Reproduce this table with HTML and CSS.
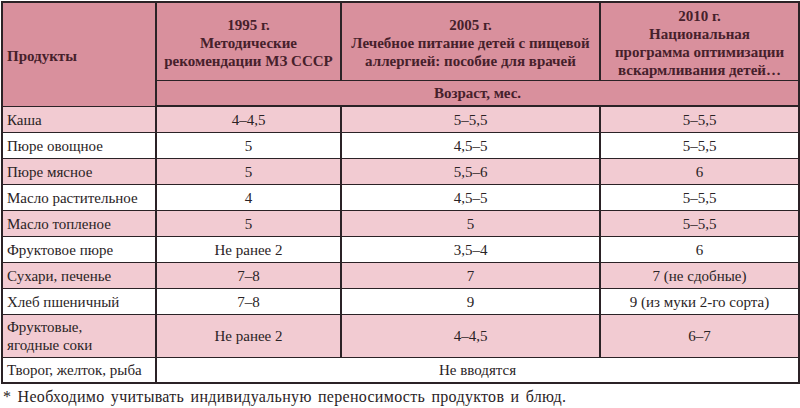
FILE: index.html
```html
<!DOCTYPE html>
<html lang="ru">
<head>
<meta charset="utf-8">
<title>Сроки введения продуктов</title>
<link rel="stylesheet" href="styles.css">
</head>
<body>
<div class="page">
<table class="grid">
  <colgroup>
    <col class="c1"><col class="c2"><col class="c3"><col class="c4">
  </colgroup>
  <thead>
    <tr class="h1">
      <th rowspan="2" class="prod">Продукты</th>
      <th>1995 г.<br>Методические<br>рекомендации МЗ СССР</th>
      <th>2005 г.<br>Лечебное питание детей с пищевой<br>аллергией: пособие для врачей</th>
      <th>2010 г.<br>Национальная<br>программа оптимизации<br>вскармливания детей…</th>
    </tr>
    <tr class="h2">
      <th colspan="3">Возраст, мес.</th>
    </tr>
  </thead>
  <tbody>
    <tr class="pink"><td>Каша</td><td>4–4,5</td><td>5–5,5</td><td>5–5,5</td></tr>
    <tr><td>Пюре овощное</td><td>5</td><td>4,5–5</td><td>5–5,5</td></tr>
    <tr class="pink"><td>Пюре мясное</td><td>5</td><td>5,5–6</td><td>6</td></tr>
    <tr><td>Масло растительное</td><td>4</td><td>4,5–5</td><td>5–5,5</td></tr>
    <tr class="pink"><td>Масло топленое</td><td>5</td><td>5</td><td>5–5,5</td></tr>
    <tr><td>Фруктовое пюре</td><td>Не ранее 2</td><td>3,5–4</td><td>6</td></tr>
    <tr class="pink"><td>Сухари, печенье</td><td>7–8</td><td>7</td><td>7 (не сдобные)</td></tr>
    <tr><td>Хлеб пшеничный</td><td>7–8</td><td>9</td><td>9 (из муки 2-го сорта)</td></tr>
    <tr class="pink tall"><td>Фруктовые,<br>ягодные соки</td><td>Не ранее 2</td><td>4–4,5</td><td>6–7</td></tr>
    <tr><td>Творог, желток, рыба</td><td colspan="3">Не вводятся</td></tr>
  </tbody>
</table>
<p class="note">* Необходимо учитывать индивидуальную переносимость продуктов и блюд.</p>
</div>
</body>
</html>
```

FILE: styles.css
```css
html, body {
  margin: 0;
  padding: 0;
  background: #ffffff;
  font-family: "Liberation Serif", serif;
}
.page {
  padding: 1px 1px 0 1px;
  color: #2a2325;
}
.grid {
  border-collapse: collapse;
  table-layout: fixed;
  width: 797px;
  border: 2px solid #2b2226;
}
.c1 { width: 154px; }
.c2 { width: 185px; }
.c3 { width: 259px; }
.c4 { width: 199px; }
.grid th, .grid td {
  border-top: 1px solid #2b2226;
  border-bottom: 1px solid #2b2226;
  border-left: 2px solid #2b2226;
  border-right: 2px solid #2b2226;
  padding: 1px 4px 0 4px;
  text-align: center;
  vertical-align: middle;
  font-size: 15px;
  line-height: 18px;
}
.grid th {
  background: #d9909d;
  color: #46202b;
  font-weight: bold;
}
.grid .h1 th {
  padding-top: 4px;
}
.grid .prod {
  text-align: left;
  padding-left: 4px;
}
.h1 { height: 78px; }
.h2 { height: 26px; }
.grid .h2 th {
  padding-top: 1px;
  border-bottom: 2px solid #2b2226;
}
.grid tbody tr { height: 26px; }
.grid tbody tr.tall { height: 43px; }
.grid tbody td:first-child {
  text-align: left;
  padding-left: 4px;
}
.grid tbody tr.pink td { background: #f2cbd2; }
.note {
  margin: 4px 0 0 2px;
  font-size: 16px;
  line-height: 18px;
  letter-spacing: 0.3px;
  word-spacing: 2px;
  color: #2a2325;
}
```
